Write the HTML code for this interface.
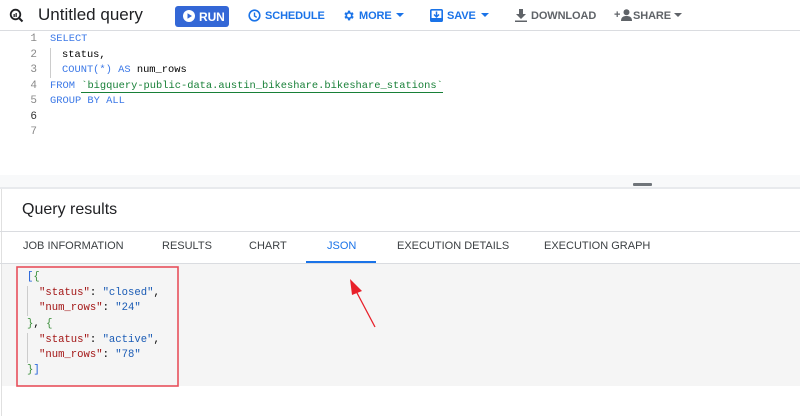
<!DOCTYPE html>
<html><head><style>
*{margin:0;padding:0;box-sizing:border-box}
body{width:800px;height:416px;background:#fff;font-family:"Liberation Sans",sans-serif;position:relative;overflow:hidden}
.a{position:absolute;white-space:nowrap}
.tb{font-size:11px;font-weight:bold;color:#1a73e8;letter-spacing:-0.1px}
.code{font-family:"Liberation Mono",monospace;font-size:10.4px}
.kw{color:#3b78e7}
.ln{color:#888;font-family:"Liberation Mono",monospace;font-size:11px;width:14px;text-align:right}
.tab{font-size:11px;color:#3c4043;top:240px}
.j{font-family:"Liberation Mono",monospace;font-size:10.6px;left:27px}
.k{color:#a31515}.s{color:#1a5bb5}.g{color:#3a8f3a}.b{color:#1a5bd8}
</style></head><body>
<svg class="a" style="left:9px;top:8px" width="15" height="15" viewBox="0 0 15 15"><circle cx="6.5" cy="6.5" r="4.8" fill="none" stroke="#202124" stroke-width="1.8"/><line x1="10" y1="10" x2="13.5" y2="13.5" stroke="#202124" stroke-width="2"/><rect x="4.5" y="6" width="1.3" height="3" fill="#202124"/><rect x="6.5" y="5" width="1.3" height="4" fill="#202124"/></svg>
<div class="a" style="left:38px;top:5px;font-size:17px;color:#202124">Untitled query</div>
<div class="a" style="left:175px;top:6px;width:54px;height:21px;background:#3367d6;border-radius:3px"></div>
<svg class="a" style="left:183px;top:10px" width="12" height="12"><circle cx="6" cy="6" r="6" fill="#fff"/><path d="M4.5 3.3L9 6 4.5 8.7z" fill="#3367d6"/></svg>
<div class="a tb" style="left:199px;top:10px;color:#fff;font-size:12px">RUN</div>
<svg class="a" style="left:248px;top:9px" width="13" height="13"><circle cx="6.5" cy="6.5" r="5.3" fill="none" stroke="#1a73e8" stroke-width="1.6"/><path d="M6.5 3.5V7l2.2 1.4" fill="none" stroke="#1a73e8" stroke-width="1.4"/></svg>
<div class="a tb" style="left:265px;top:10px">SCHEDULE</div>
<svg class="a" style="left:342px;top:9px" width="13" height="13" viewBox="0 0 24 24"><path fill="#1a73e8" d="M19.4 13a7.5 7.5 0 0 0 0-2l2.1-1.6-2-3.5-2.5 1a7.5 7.5 0 0 0-1.7-1L15 3h-4l-.4 2.9a7.5 7.5 0 0 0-1.7 1l-2.5-1-2 3.5L6.6 11a7.5 7.5 0 0 0 0 2l-2.1 1.6 2 3.5 2.5-1a7.5 7.5 0 0 0 1.7 1L11 21h4l.4-2.9a7.5 7.5 0 0 0 1.7-1l2.5 1 2-3.5zM13 15.5a3.5 3.5 0 1 1 0-7 3.5 3.5 0 0 1 0 7z"/></svg>
<div class="a tb" style="left:359px;top:10px">MORE</div>
<svg class="a" style="left:396px;top:13px" width="8" height="5"><path d="M0 0h8L4 4z" fill="#1a73e8"/></svg>
<svg class="a" style="left:430px;top:9px" width="13" height="13"><rect x="0.8" y="0.8" width="11.4" height="11.4" rx="1" fill="none" stroke="#1a73e8" stroke-width="1.6"/><path d="M6.5 2.5v5M4 5.5l2.5 2.5L9 5.5" fill="none" stroke="#1a73e8" stroke-width="1.5"/><rect x="1" y="9" width="11" height="3" fill="#1a73e8"/></svg>
<div class="a tb" style="left:447px;top:10px">SAVE</div>
<svg class="a" style="left:481px;top:13px" width="8" height="5"><path d="M0 0h8L4 4z" fill="#1a73e8"/></svg>
<svg class="a" style="left:515px;top:9px" width="12" height="13"><path d="M4 0h4v5h3L6 10 1 5h3z" fill="#5f6368"/><rect x="0" y="11.5" width="12" height="1.5" fill="#5f6368"/></svg>
<div class="a tb" style="left:531px;top:10px;color:#5f6368">DOWNLOAD</div>
<div class="a" style="left:614px;top:9px;font-size:11px;font-weight:bold;color:#5f6368">+</div>
<svg class="a" style="left:621px;top:9px" width="11" height="12"><circle cx="5.5" cy="3.3" r="3" fill="#5f6368"/><path d="M0 12c0-4 2.5-5 5.5-5s5.5 1 5.5 5z" fill="#5f6368"/></svg>
<div class="a tb" style="left:633px;top:10px;color:#5f6368">SHARE</div>
<svg class="a" style="left:674px;top:13px" width="8" height="5"><path d="M0 0h8L4 4z" fill="#5f6368"/></svg>
<div class="a" style="left:0;top:30px;width:800px;height:1px;background:#dadce0"></div>
<div class="a ln" style="left:23px;top:33px">1</div>
<div class="a ln" style="left:23px;top:49px">2</div>
<div class="a ln" style="left:23px;top:64px">3</div>
<div class="a ln" style="left:23px;top:80px">4</div>
<div class="a ln" style="left:23px;top:95px">5</div>
<div class="a ln" style="left:23px;top:111px;color:#333">6</div>
<div class="a ln" style="left:23px;top:126px">7</div>
<div class="a" style="left:50px;top:48px;width:1px;height:30px;background:#ccc"></div>
<div class="a code kw" style="left:50px;top:33px">SELECT</div>
<div class="a code" style="left:62px;top:49px">status,</div>
<div class="a code" style="left:62px;top:64px"><span class="kw">COUNT(*) AS</span> num_rows</div>
<div class="a code" style="left:50px;top:80px"><span class="kw">FROM</span> <span style="color:#188038;border-bottom:1px solid #188038">`bigquery-public-data.austin_bikeshare.bikeshare_stations`</span></div>
<div class="a code kw" style="left:50px;top:95px">GROUP BY ALL</div>
<div class="a" style="left:0;top:175px;width:800px;height:12px;background:#f8f9fa"></div>
<div class="a" style="left:633px;top:183px;width:19px;height:3px;background:#70757a;border-radius:1px"></div>
<div class="a" style="left:0;top:187px;width:800px;height:2px;background:#e8eaed"></div>
<div class="a" style="left:1px;top:189px;width:1px;height:227px;background:#e0e0e0"></div>
<div class="a" style="left:22px;top:201px;font-size:16px;color:#202124">Query results</div>
<div class="a" style="left:0;top:231px;width:800px;height:1px;background:#dadce0"></div>
<div class="a tab" style="left:23px">JOB INFORMATION</div>
<div class="a tab" style="left:162px">RESULTS</div>
<div class="a tab" style="left:249px">CHART</div>
<div class="a tab" style="left:327px;color:#1a73e8">JSON</div>
<div class="a tab" style="left:397px">EXECUTION DETAILS</div>
<div class="a tab" style="left:544px">EXECUTION GRAPH</div>
<div class="a" style="left:306px;top:261px;width:70px;height:2px;background:#1a73e8"></div>
<div class="a" style="left:0;top:263px;width:800px;height:1px;background:#dadce0"></div>
<div class="a" style="left:2px;top:264px;width:798px;height:122px;background:#f5f5f5"></div>
<div class="a" style="left:27px;top:286px;width:1px;height:30px;background:#ccc"></div>
<div class="a" style="left:27px;top:333px;width:1px;height:30px;background:#ccc"></div>
<div class="a j" style="top:271px"><span class="b">[</span><span class="g">{</span></div>
<div class="a j" style="top:287px;left:39px"><span class="k">"status"</span>: <span class="s">"closed"</span>,</div>
<div class="a j" style="top:302px;left:39px"><span class="k">"num_rows"</span>: <span class="s">"24"</span></div>
<div class="a j" style="top:318px"><span class="g">}</span>, <span class="g">{</span></div>
<div class="a j" style="top:334px;left:39px"><span class="k">"status"</span>: <span class="s">"active"</span>,</div>
<div class="a j" style="top:349px;left:39px"><span class="k">"num_rows"</span>: <span class="s">"78"</span></div>
<div class="a j" style="top:364px"><span class="g">}</span><span class="b">]</span></div>
<svg class="a" style="left:16px;top:266px" width="164" height="122"><rect x="1" y="1" width="161" height="119" fill="none" stroke="#e8505b" stroke-width="1.6"/></svg>
<svg class="a" style="left:340px;top:275px" width="45" height="60"><line x1="35" y1="52" x2="16" y2="16" stroke="#e8202a" stroke-width="1.3"/><path d="M10 4L22 16 12 20z" fill="#e8202a"/></svg>
</body></html>
